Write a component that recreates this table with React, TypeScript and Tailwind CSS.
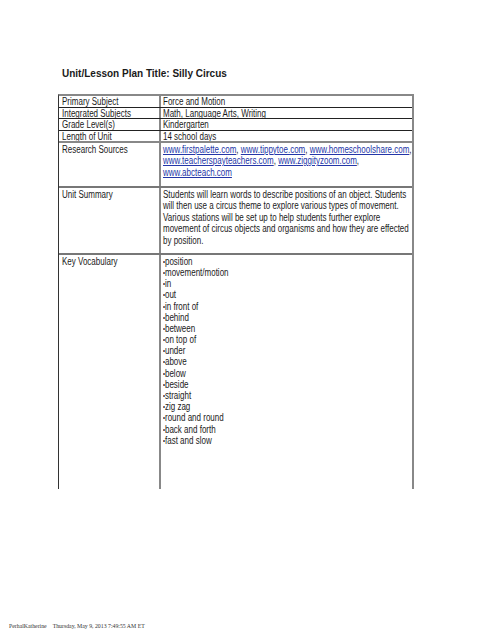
import React from "react";

const basics = [
  ["Primary Subject", "Force and Motion"],
  ["Integrated Subjects", "Math, Language Arts, Writing"],
  ["Grade Level(s)", "Kindergarten"],
  ["Length of Unit", "14 school days"],
];

const vocab = [
  "position",
  "movement/motion",
  "in",
  "out",
  "in front of",
  "behind",
  "between",
  "on top of",
  "under",
  "above",
  "below",
  "beside",
  "straight",
  "zig zag",
  "round and round",
  "back and forth",
  "fast and slow",
];

function Link({ children }: { children: React.ReactNode }) {
  return <span className="text-[#2436a8] underline decoration-[#2436a8]">{children}</span>;
}

// the source text is set in a condensed face, so squeeze it horizontally
function Narrow({ children, className = "" }: { children: React.ReactNode; className?: string }) {
  return <div className={`origin-top-left scale-x-[0.8] w-[125%] whitespace-nowrap ${className}`}>{children}</div>;
}

const label = "w-[102px] shrink-0 pl-[3px] border-r-2 border-r-[#888] min-w-0 overflow-hidden";
const value = "flex-1 min-w-0 pl-[2px] overflow-hidden";

export default function App() {
  return (
    <div className="w-full h-[640px] bg-white flex flex-col text-[#1a1a1a] font-['Liberation_Sans',Arial,sans-serif]">
      {/* title */}
      <div className="pt-[67px] pl-[62px] text-[10px] font-bold leading-[14px]">
        Unit/Lesson Plan Title: Silly Circus
      </div>

      {/* table */}
      <div className="ml-[58px] mt-[13px] w-[356px] border-l border-l-[#333] border-r-2 border-r-[#888] border-t-2 border-t-[#888] text-[10px] leading-[11.5px]">
        {basics.map(([k, v], i) => (
          <div key={k} className={`flex h-[11.7px] ${i < 3 ? "border-b border-b-[#222]" : "border-b-2 border-b-[#888]"}`}>
            <div className={label}>
              <Narrow>{k}</Narrow>
            </div>
            <div className={value}>
              <Narrow>{v}</Narrow>
            </div>
          </div>
        ))}

        <div className="flex h-[45px] border-b-2 border-b-[#777]">
          <div className={`${label} pt-[1px]`}>
            <Narrow>Research Sources</Narrow>
          </div>
          <div className={`${value} pt-[1px]`}>
            <Narrow>
              <Link>www.firstpalette.com</Link>, <Link>www.tippytoe.com</Link>, <Link>www.homeschoolshare.com</Link>,
              <br />
              <Link>www.teacherspayteachers.com</Link>, <Link>www.ziggityzoom.com</Link>,
              <br />
              <Link>www.abcteach.com</Link>
            </Narrow>
          </div>
        </div>

        <div className="flex h-[67px] border-b-2 border-b-[#777]">
          <div className={`${label} pt-[1px]`}>
            <Narrow>Unit Summary</Narrow>
          </div>
          <div className={`${value} pt-[1px]`}>
            <Narrow>
              Students will learn words to describe positions of an object. Students
              <br />
              will then use a circus theme to explore various types of movement.
              <br />
              Various stations will be set up to help students further explore
              <br />
              movement of circus objects and organisms and how they are effected
              <br />
              by position.
            </Narrow>
          </div>
        </div>

        <div className="flex h-[234px]">
          <div className={`${label} pt-[1px]`}>
            <Narrow>Key Vocabulary</Narrow>
          </div>
          <div className={`${value} pl-[1px] pt-[1px]`}>
            <Narrow>
              {vocab.map((w) => (
                <div key={w} className="h-[11.2px] leading-[11.2px]">
                  <span className="text-[7px] leading-none align-[1px]">•</span>
                  {w}
                </div>
              ))}
            </Narrow>
          </div>
        </div>
      </div>

      {/* footer */}
      <div className="mt-auto mb-[10px] pl-[9px] flex gap-[6px] text-[5.8px] leading-[8px] text-[#333] font-['Liberation_Serif',serif]">
        <span>PerhalKatherine</span>
        <span>Thursday, May 9, 2013 7:49:55 AM ET</span>
      </div>
    </div>
  );
}
